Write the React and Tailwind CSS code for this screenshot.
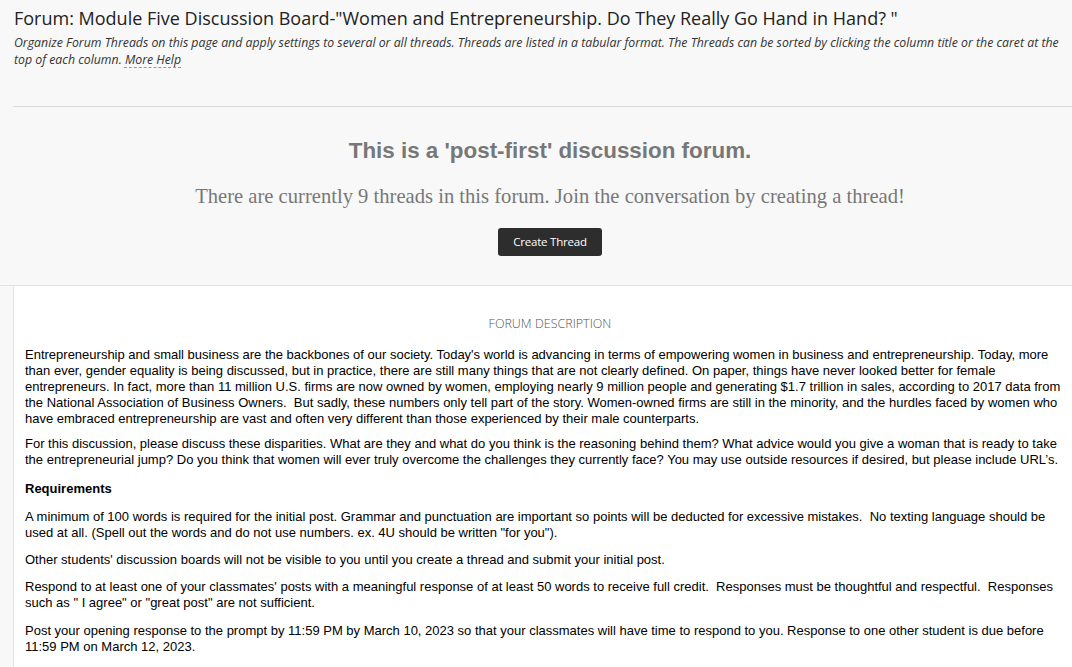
export default function App() {
  const body = "font-['Liberation_Sans',Arial,sans-serif] text-[13px] leading-[16px] text-black";
  return (
    <div className="min-h-screen bg-[#f8f8f8]">
      <div className="pl-[14px] pr-[3px] pt-[6px] font-['Open_Sans',sans-serif]">
        <h1 className="text-[18px] leading-[24px] text-[#222] font-normal">
          Forum: Module Five Discussion Board-"Women and Entrepreneurship. Do They Really Go Hand in Hand? "
        </h1>
        <p className="mt-[4px] text-[12.3px] leading-[17px] italic text-[#333]">
          Organize Forum Threads on this page and apply settings to several or all threads. Threads are listed in a tabular format. The Threads can be sorted by clicking the column title or the caret at the top of each column.{" "}
          <span className="underline decoration-dashed decoration-[#999] underline-offset-[3px]">More Help</span>
        </p>
      </div>
      <div className="ml-[13px] mt-[38px] border-t border-[#dcdcdc]"></div>
      <div className="border-b border-[#e2e2e2] pl-[28px] pt-[28px] pb-[29px] text-center">
        <h2 className="font-['Liberation_Sans',Arial,sans-serif] font-bold text-[22.4px] leading-[32px] text-[#777]">
          This is a 'post-first' discussion forum.
        </h2>
        <p className="mt-[17px] font-['Liberation_Serif',Georgia,serif] text-[20.6px] leading-[24px] text-[#777]">
          There are currently 9 threads in this forum. Join the conversation by creating a thread!
        </p>
        <button className="mt-[20px] h-[28px] w-[104px] rounded-[3px] bg-[#2d2d2d] font-['Open_Sans',sans-serif] text-[11.5px] tracking-[-0.2px] text-white">
          Create Thread
        </button>
      </div>
      <div className="ml-[13px] min-h-[400px] border-l border-[#e2e2e2] bg-white pl-[11px] pr-[10px] pt-[30px] pb-[20px]">
        <div className="text-center font-['Open_Sans',sans-serif] font-light text-[12.5px] leading-[16px] text-[#555] pl-[13px]">
          FORUM DESCRIPTION
        </div>
        <div className={`${body} mt-[15px]`}>
          <p className="mb-[9px]">
            Entrepreneurship and small business are the backbones of our society. Today's world is advancing in terms of empowering women in business and entrepreneurship. Today, more than ever, gender equality is being discussed, but in practice, there are still many things that are not clearly defined. On paper, things have never looked better for female entrepreneurs. In fact, more than 11 million U.S. firms are now owned by women, employing nearly 9 million people and generating $1.7 trillion in sales, according to 2017 data from the National Association of Business Owners.&nbsp; But sadly, these numbers only tell part of the story. Women-owned firms are still in the minority, and the hurdles faced by women who have embraced entrepreneurship are vast and often very different than those experienced by their male counterparts.
          </p>
          <p className="mb-[13px]">
            For this discussion, please discuss these disparities. What are they and what do you think is the reasoning behind them? What advice would you give a woman that is ready to take the entrepreneurial jump? Do you think that women will ever truly overcome the challenges they currently face? You may use outside resources if desired, but please include URL’s.
          </p>
          <p className="mb-[12px] font-bold">Requirements</p>
          <p className="mb-[11px]">
            A minimum of 100 words is required for the initial post. Grammar and punctuation are important so points will be deducted for excessive mistakes.&nbsp; No texting language should be used at all. (Spell out the words and do not use numbers. ex. 4U should be written "for you").
          </p>
          <p className="mb-[11px]">
            Other students' discussion boards will not be visible to you until you create a thread and submit your initial post.
          </p>
          <p className="mb-[12px]">
            Respond to at least one of your classmates' posts with a meaningful response of at least 50 words to receive full credit.&nbsp; Responses must be thoughtful and respectful.&nbsp; Responses such as " I agree" or "great post" are not sufficient.
          </p>
          <p>
            Post your opening response to the prompt by 11:59 PM by March 10, 2023 so that your classmates will have time to respond to you. Response to one other student is due before 11:59 PM on March 12, 2023.
          </p>
        </div>
      </div>
    </div>
  );
}
